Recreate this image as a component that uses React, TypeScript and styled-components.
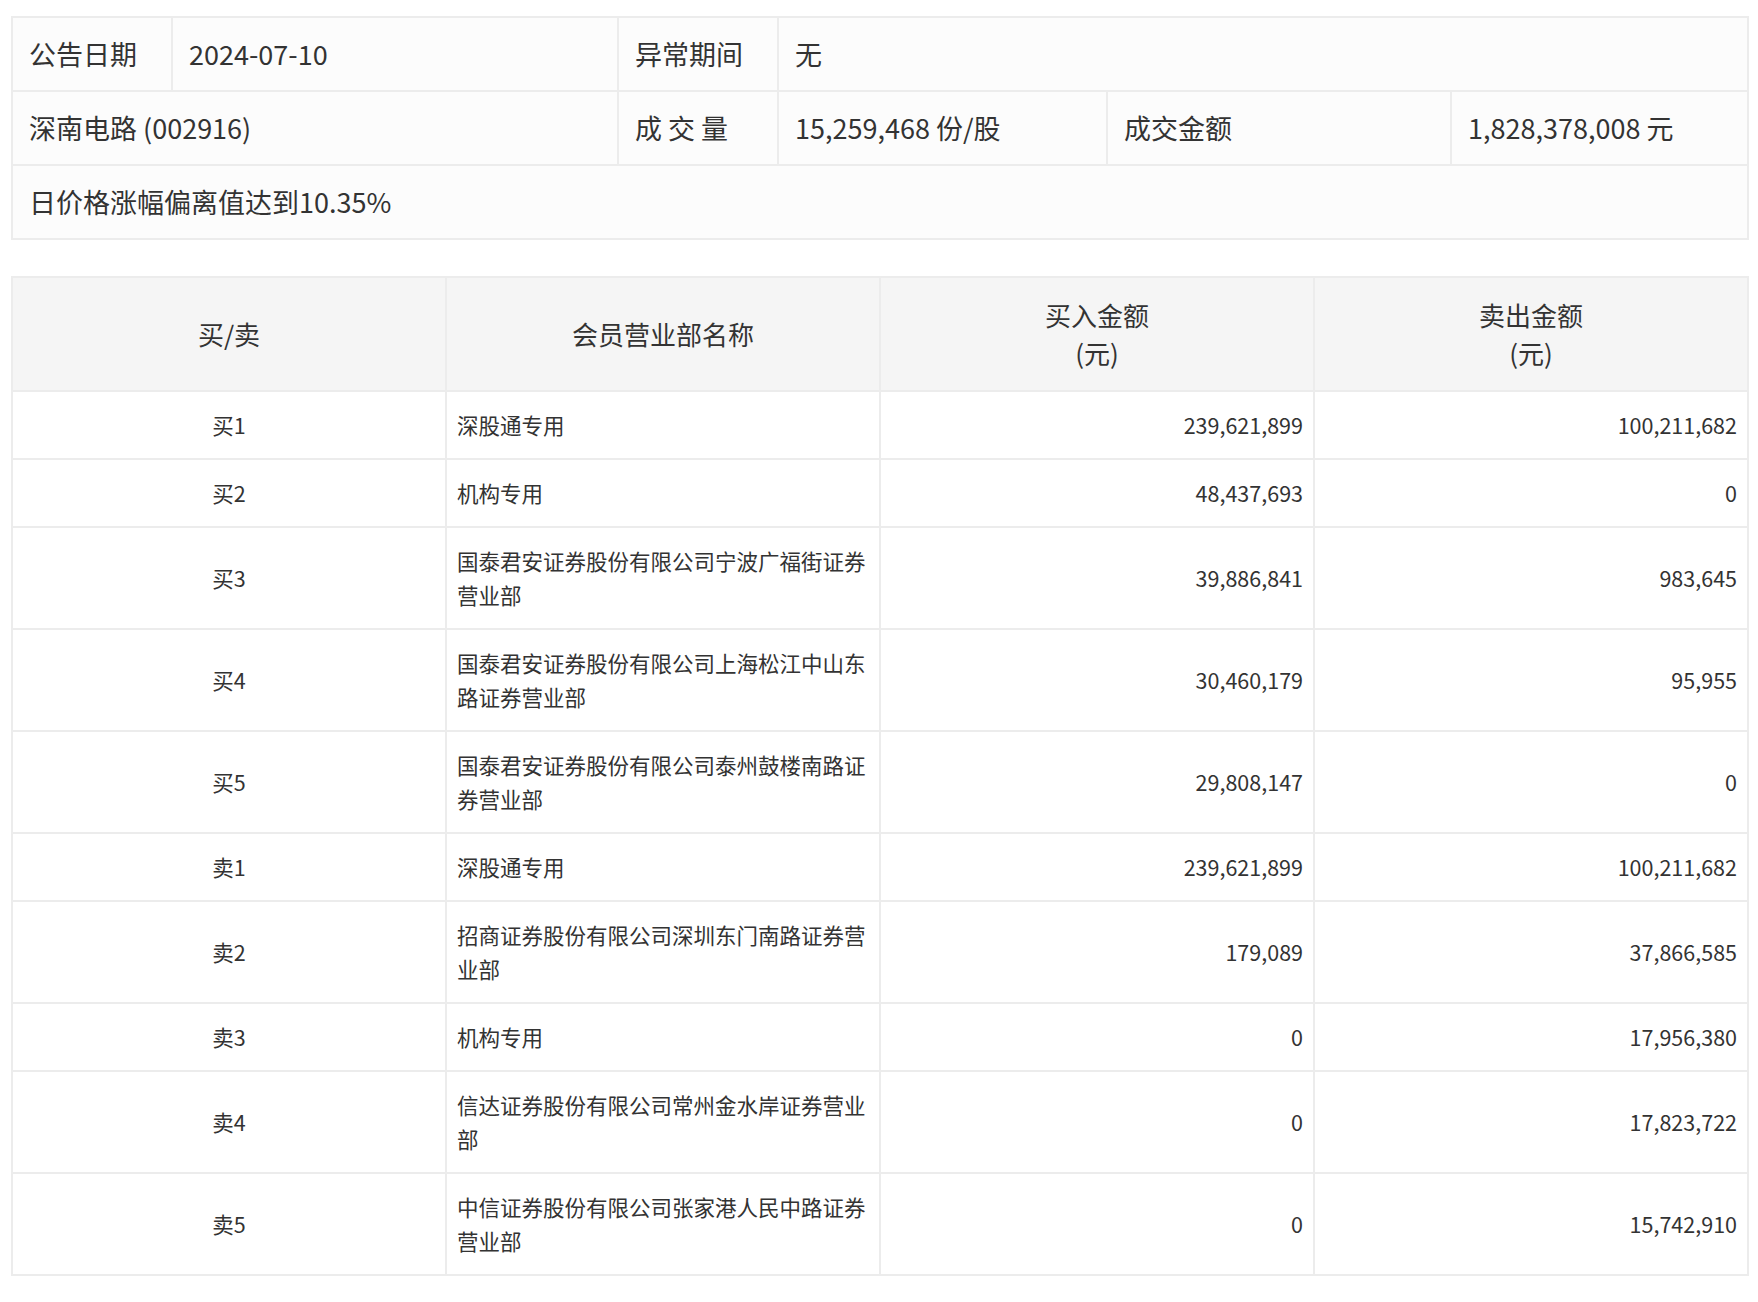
import React from "react";
import styled, { createGlobalStyle } from "styled-components";

const Global = createGlobalStyle`
  body { margin: 0; padding: 16px 9px 20px 11px; background: #fff; color: #333;
    font-family: "Noto Sans CJK SC", "Noto Sans", sans-serif; }
`;

const Info = styled.div`
  display: grid;
  grid-template-columns: 158px 444px 158px 327px 342px 1fr;
  gap: 2px;
  background: #ececec;
  border: 2px solid #ececec;
`;
const InfoCell = styled.div<{ span?: number }>`
  grid-column: span ${(p) => p.span || 1};
  background: #fcfcfc;
  font-size: 27px;
  line-height: 36px;
  padding: 18px 16px 18px 16px;
  white-space: nowrap;
`;

const Table = styled.div`
  margin-top: 36px;
  display: grid;
  grid-template-columns: repeat(4, 1fr);
  gap: 2px;
  background: #ececec;
  border: 2px solid #ececec;
`;
const Head = styled.div`
  background: #f5f5f5;
  font-size: 26px;
  line-height: 38px;
  padding: 18px 10px;
  display: flex;
  align-items: center;
  justify-content: center;
  text-align: center;
`;
const Cell = styled.div<{ align: "left" | "center" | "right" }>`
  background: #fff;
  font-size: 21.5px;
  line-height: 34px;
  padding: 16px 10px;
  display: flex;
  align-items: center;
  justify-content: ${(p) => (p.align === "left" ? "flex-start" : p.align === "right" ? "flex-end" : "center")};
  text-align: ${(p) => p.align};
`;

const rows: [string, string, string, string][] = [
  ["买1", "深股通专用", "239,621,899", "100,211,682"],
  ["买2", "机构专用", "48,437,693", "0"],
  ["买3", "国泰君安证券股份有限公司宁波广福街证券营业部", "39,886,841", "983,645"],
  ["买4", "国泰君安证券股份有限公司上海松江中山东路证券营业部", "30,460,179", "95,955"],
  ["买5", "国泰君安证券股份有限公司泰州鼓楼南路证券营业部", "29,808,147", "0"],
  ["卖1", "深股通专用", "239,621,899", "100,211,682"],
  ["卖2", "招商证券股份有限公司深圳东门南路证券营业部", "179,089", "37,866,585"],
  ["卖3", "机构专用", "0", "17,956,380"],
  ["卖4", "信达证券股份有限公司常州金水岸证券营业部", "0", "17,823,722"],
  ["卖5", "中信证券股份有限公司张家港人民中路证券营业部", "0", "15,742,910"],
];

export default function App() {
  return (
    <>
      <Global />
      <Info>
        <InfoCell>公告日期</InfoCell>
        <InfoCell>2024-07-10</InfoCell>
        <InfoCell>异常期间</InfoCell>
        <InfoCell span={3}>无</InfoCell>
        <InfoCell span={2}>深南电路 (002916)</InfoCell>
        <InfoCell>成 交 量</InfoCell>
        <InfoCell>15,259,468 份/股</InfoCell>
        <InfoCell>成交金额</InfoCell>
        <InfoCell>1,828,378,008 元</InfoCell>
        <InfoCell span={6}>日价格涨幅偏离值达到10.35%</InfoCell>
      </Info>
      <Table>
        <Head>买/卖</Head>
        <Head>会员营业部名称</Head>
        <Head>买入金额<br />(元)</Head>
        <Head>卖出金额<br />(元)</Head>
        {rows.map((r, i) => (
          <React.Fragment key={i}>
            <Cell align="center">{r[0]}</Cell>
            <Cell align="left">{r[1]}</Cell>
            <Cell align="right">{r[2]}</Cell>
            <Cell align="right">{r[3]}</Cell>
          </React.Fragment>
        ))}
      </Table>
    </>
  );
}
